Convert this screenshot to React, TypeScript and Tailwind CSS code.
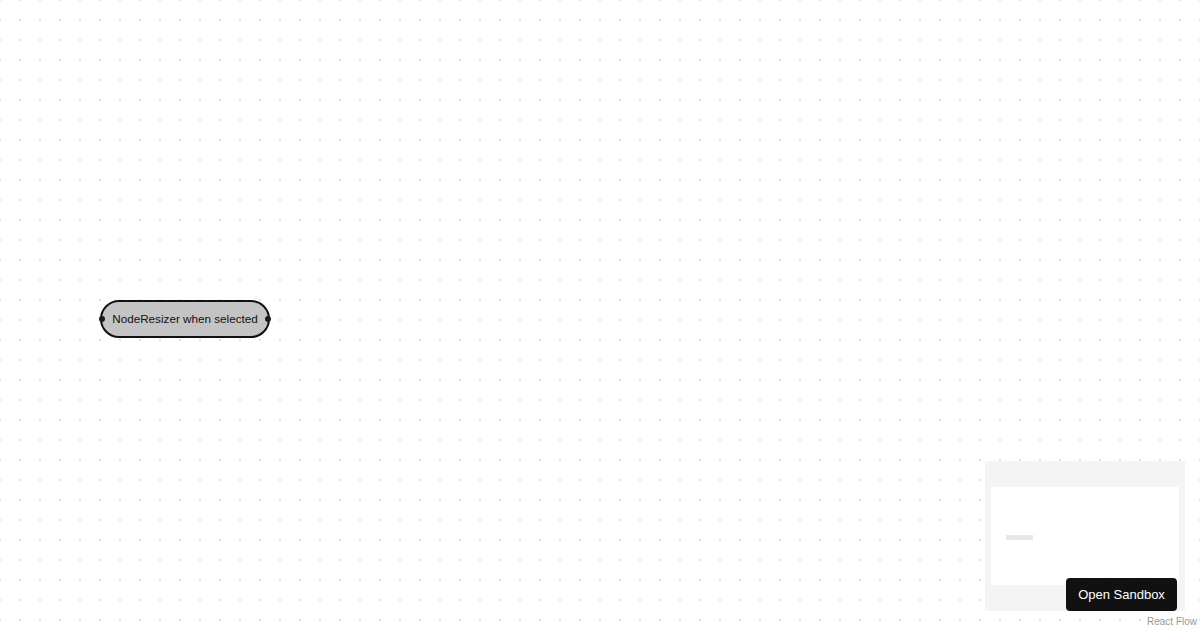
import React from 'react'

export default function App() {
  return (
    <div className="relative w-[1200px] h-[630px] overflow-hidden bg-white font-['Liberation_Sans',Arial,sans-serif]">
      {/* dotted background */}
      <svg className="absolute inset-0" width="1200" height="630">
        <defs>
          <pattern id="dots" x="-1" y="-1" width="20" height="20" patternUnits="userSpaceOnUse">
            <rect x="0" y="0" width="2" height="2" fill="#e3e3e3" />
          </pattern>
        </defs>
        <rect width="1200" height="630" fill="url(#dots)" />
      </svg>

      {/* node */}
      <div className="absolute left-[100px] top-[300px] w-[170px] h-[38px] rounded-full border-2 border-[#111] bg-[#c4c4c4] flex items-center justify-center text-[11.7px] text-[#111]">
        NodeResizer when selected
        <span className="absolute left-[-3px] top-1/2 -translate-y-1/2 w-[6px] h-[6px] rounded-full bg-[#1a1a1a]" />
        <span className="absolute right-[-3px] top-1/2 -translate-y-1/2 w-[6px] h-[6px] rounded-full bg-[#1a1a1a]" />
      </div>

      {/* minimap */}
      <div className="absolute left-[985px] top-[461px] w-[200px] h-[150px] bg-[#f4f4f4] pt-[26px] px-[6px]">
        <div className="w-[188px] h-[98px] bg-white pl-[15px] pt-[48px]">
          <div className="w-[27px] h-[5px] bg-[#e8e8e8] flex items-center justify-center">
            <span className="text-[4px] leading-none tracking-[1px] text-[#bbb]">·······</span>
          </div>
        </div>
      </div>

      {/* open sandbox */}
      <button className="absolute left-[1066px] top-[578px] w-[111px] h-[33px] rounded-[4px] bg-[#111] text-white text-[13px] flex items-center justify-center">
        Open Sandbox
      </button>

      {/* attribution */}
      <div className="absolute right-[3px] bottom-[3px] text-[10px] text-[#999] leading-none">React Flow</div>
    </div>
  )
}
